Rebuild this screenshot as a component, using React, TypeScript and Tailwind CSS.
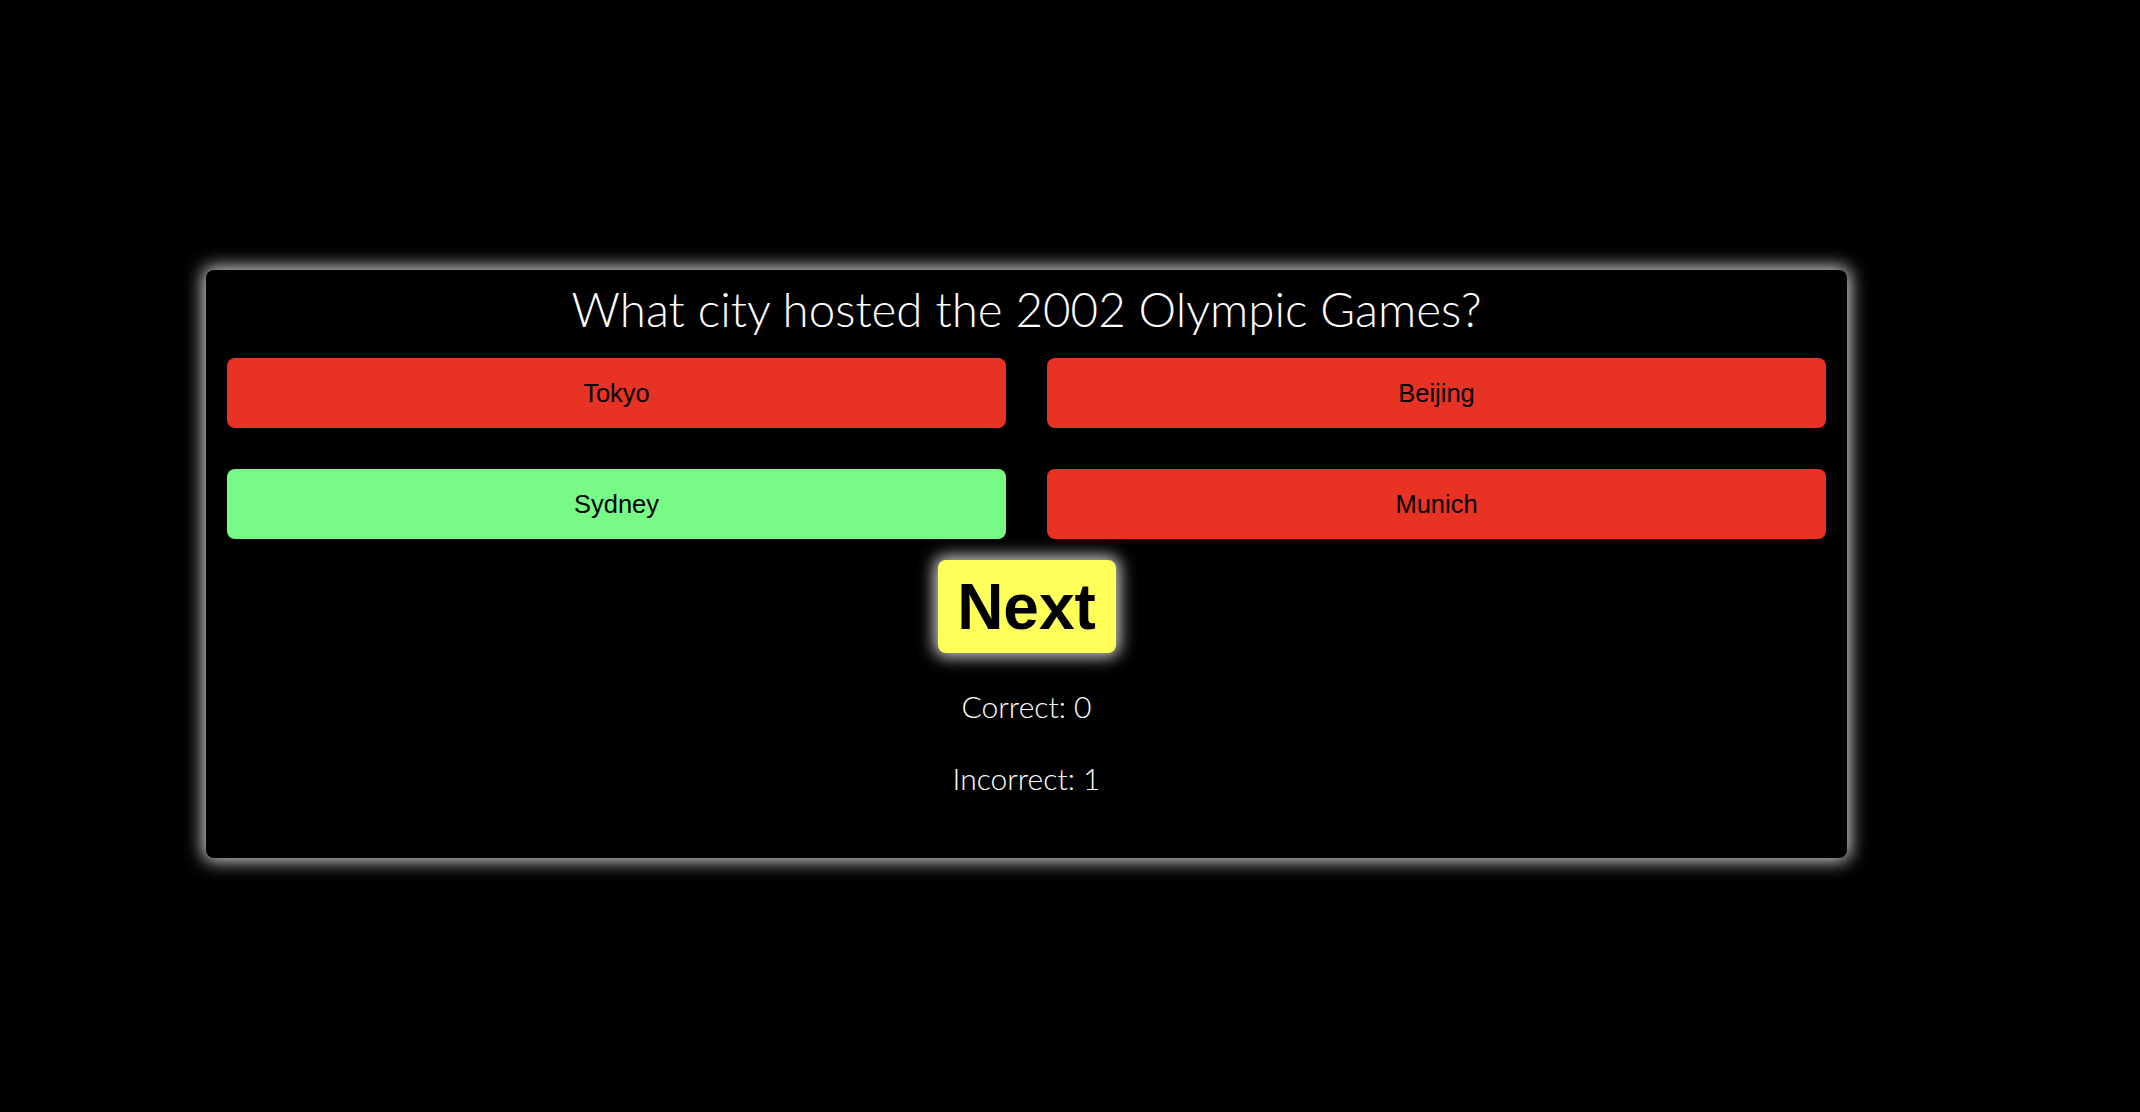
import { useState } from "react";

const ANSWERS = [
  { label: "Tokyo", correct: false },
  { label: "Beijing", correct: false },
  { label: "Sydney", correct: true },
  { label: "Munich", correct: false },
];

// Quiz card after a wrong pick: every option shows its colour, the right one in green.
export default function App() {
  const [score] = useState({ correct: 0, incorrect: 1 });

  return (
    <div className="min-h-screen bg-black pt-[270px]">
      <div className="ml-[206px] w-[1641px] rounded-[8px] bg-black pt-[10px] pb-[62px] shadow-[0_0_18px_3px_rgba(255,255,255,0.85)]">
        <h2 className="mb-[21px] text-center font-['Lato','Noto_Sans',sans-serif] text-[47.5px] leading-[1.2] font-light text-white">
          What city hosted the 2002 Olympic Games?
        </h2>

        <div className="grid grid-cols-2 gap-x-[41px] gap-y-[41px] px-[21px]">
          {ANSWERS.map((a) => (
            <button
              key={a.label}
              type="button"
              className={`h-[70px] rounded-[8px] font-['Liberation_Sans',Arial,sans-serif] text-[25.5px] text-black ${
                a.correct ? "bg-[#77fa86]" : "bg-[#e83223]"
              }`}
            >
              {a.label}
            </button>
          ))}
        </div>

        <div className="mt-[21px] flex justify-center">
          <button
            type="button"
            className="h-[93px] w-[178px] rounded-[8px] bg-[#ffff5a] font-['Liberation_Sans',Arial,sans-serif] text-[64px] leading-none font-bold text-black shadow-[0_0_16px_4px_rgba(255,255,255,0.8)]"
          >
            Next
          </button>
        </div>

        <div className="mt-[35px] flex flex-col items-center gap-[36px] font-['Lato','Noto_Sans',sans-serif] text-[30px] leading-[1.2] font-light text-white">
          <p>Correct: {score.correct}</p>
          <p>Incorrect: {score.incorrect}</p>
        </div>
      </div>
    </div>
  );
}
